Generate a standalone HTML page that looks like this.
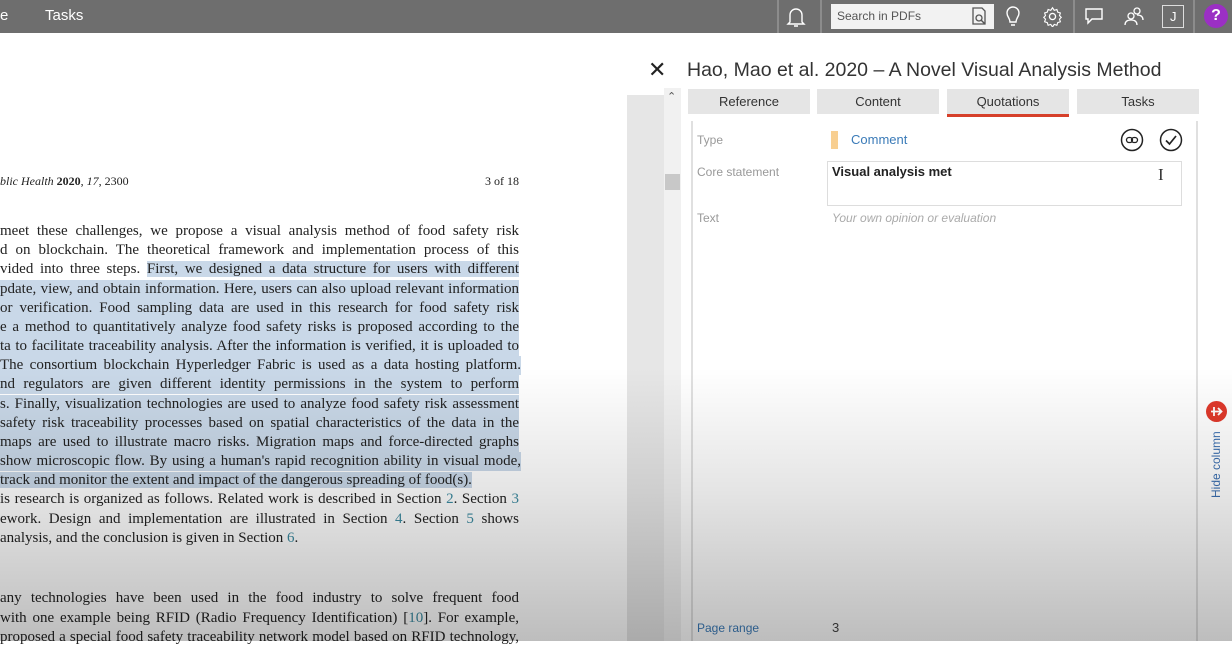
<!DOCTYPE html>
<html><head><meta charset="utf-8"><style>
*{margin:0;padding:0;box-sizing:border-box}
body{width:1232px;height:641px;overflow:hidden;position:relative;background:#fff;font-family:"Liberation Sans",sans-serif}
.abs{position:absolute}
#top{left:0;top:0;width:1232px;height:33px;background:#6e6e6e}
#top .t{color:#fff;font-size:15px;top:7px}
.div{top:0;width:2px;height:33px;background:#8c8c8c}
#pdfbg{left:0;top:33px;width:664px;height:608px;background:#fff}
#page{left:0;top:95px;width:627px;height:546px;background:#fff}
#gray{left:627px;top:95px;width:37px;height:546px;background:#e6e6e6}
#sb{left:664px;top:88px;width:17px;height:553px;background:#f1f1f1}
.ln{position:absolute;left:0;width:519px;height:19px;font-family:"Liberation Serif",serif;font-size:15px;line-height:19px;color:#222;text-align:justify;text-align-last:justify;white-space:nowrap;overflow:hidden}
.hl{background:#c9d8e8}
.lk{color:#3b8aa0}
.lab{font-size:12px;color:#999}
</style></head><body>
<div id="top" class="abs">
 <span class="abs t" style="left:0">e</span>
 <span class="abs t" style="left:45px">Tasks</span>
 <div class="abs div" style="left:777px"></div>
 <svg class="abs" style="left:786px;top:6px" width="20" height="22" viewBox="0 0 20 22"><path d="M4 16 V9 a6 6 0 0 1 12 0 V16 L18 18 H2 Z M8 20 h4" fill="none" stroke="#fff" stroke-width="1.4"/></svg>
 <div class="abs div" style="left:820px"></div>
 <div class="abs" style="left:831px;top:4px;width:163px;height:25px;background:#f2f2f2"></div>
 <span class="abs" style="left:837px;top:9px;font-size:12px;color:#555">Search in PDFs</span>
 <svg class="abs" style="left:970px;top:6px" width="20" height="20" viewBox="0 0 20 20"><path d="M3 2h9l3 3v13H3z" fill="none" stroke="#555" stroke-width="1.3"/><circle cx="9" cy="12" r="3" fill="none" stroke="#555" stroke-width="1.3"/><path d="M11 14l4 4" stroke="#555" stroke-width="1.5"/></svg>
 <svg class="abs" style="left:1004px;top:6px" width="18" height="22" viewBox="0 0 18 22"><path d="M6 16 C6 12 3 11 3 7 a6 6 0 0 1 12 0 c0 4 -3 5 -3 9 z M7 19h4" fill="none" stroke="#fff" stroke-width="1.4"/></svg>
 <svg class="abs" style="left:1042px;top:6px" width="21" height="21" viewBox="0 0 24 24"><circle cx="12" cy="12" r="3.5" fill="none" stroke="#fff" stroke-width="1.5"/><path d="M12 2l2 3 3-1 1 3 3 1-1 3 2 2-2 2 1 3-3 1-1 3-3-1-2 3-2-3-3 1-1-3-3-1 1-3-2-2 2-2-1-3 3-1 1-3 3 1z" fill="none" stroke="#fff" stroke-width="1.3"/></svg>
 <div class="abs div" style="left:1073px"></div>
 <svg class="abs" style="left:1084px;top:6px" width="20" height="20" viewBox="0 0 20 20"><path d="M2 3h16v10H8l-4 4v-4H2z" fill="none" stroke="#fff" stroke-width="1.4"/></svg>
 <svg class="abs" style="left:1123px;top:6px" width="22" height="20" viewBox="0 0 22 20"><circle cx="8" cy="10" r="3" fill="none" stroke="#fff" stroke-width="1.3"/><path d="M2 19c0-4 3-5 6-5s6 1 6 5" fill="none" stroke="#fff" stroke-width="1.3"/><circle cx="14" cy="5" r="3" fill="none" stroke="#fff" stroke-width="1.3"/><path d="M14 9c3 0 6 1 6 5" fill="none" stroke="#fff" stroke-width="1.3"/></svg>
 <div class="abs" style="left:1162px;top:5px;width:22px;height:23px;border:1px solid #ddd"></div>
 <span class="abs" style="left:1170px;top:9px;color:#fff;font-size:13px">J</span>
 <div class="abs div" style="left:1193px"></div>
 <div class="abs" style="left:1204px;top:4px;width:24px;height:24px;border-radius:50%;background:#9b2fc4;color:#fff;font-weight:bold;font-size:16px;text-align:center;line-height:24px">?</div>
</div>
<div id="pdfbg" class="abs"></div>
<div id="page" class="abs"></div>
<div id="gray" class="abs"></div>
<div id="sb" class="abs"><span class="abs" style="left:3px;top:2px;font-size:11px;color:#555">&#8963;</span><div class="abs" style="left:1px;top:86px;width:15px;height:16px;background:#c8c8c8"></div></div>

<div class="abs" style="left:0;top:174px;width:519px;font-family:'Liberation Serif',serif;font-size:12px;color:#222"><i>blic Health</i> <b>2020</b>, <i>17</i>, 2300<span style="float:right">3 of 18</span></div>

<div class="ln" style="top:222px">meet these challenges, we propose a visual analysis method of food safety risk</div>
<div class="ln" style="top:241px">d on blockchain. The theoretical framework and implementation process of this</div>
<div class="ln" style="top:260px">vided into three steps. <span class="hl">First, we designed a data structure for users with different</span></div>
<div class="ln hl" style="top:280px">pdate, view, and obtain information. Here, users can also upload relevant information</div>
<div class="ln hl" style="top:299px">or verification. Food sampling data are used in this research for food safety risk</div>
<div class="ln hl" style="top:318px">e a method to quantitatively analyze food safety risks is proposed according to the</div>
<div class="ln hl" style="top:337px">ta to facilitate traceability analysis. After the information is verified, it is uploaded to</div>
<div class="ln hl" style="top:356px;width:521px">The consortium blockchain Hyperledger Fabric is used as a data hosting platform.</div>
<div class="ln hl" style="top:375px">nd regulators are given different identity permissions in the system to perform</div>
<div class="ln hl" style="top:395px">s. Finally, visualization technologies are used to analyze food safety risk assessment</div>
<div class="ln hl" style="top:414px">safety risk traceability processes based on spatial characteristics of the data in the</div>
<div class="ln hl" style="top:433px">maps are used to illustrate macro risks. Migration maps and force-directed graphs</div>
<div class="ln hl" style="top:452px;width:521px">show microscopic flow. By using a human's rapid recognition ability in visual mode,</div>
<div class="ln" style="top:471px;text-align-last:left"><span class="hl">track and monitor the extent and impact of the dangerous spreading of food(s).</span></div>
<div class="ln" style="top:490px">is research is organized as follows. Related work is described in Section <span class="lk">2</span>. Section <span class="lk">3</span></div>
<div class="ln" style="top:510px">ework. Design and implementation are illustrated in Section <span class="lk">4</span>. Section <span class="lk">5</span> shows</div>
<div class="ln" style="top:529px;text-align-last:left">analysis, and the conclusion is given in Section <span class="lk">6</span>.</div>
<div class="ln" style="top:589px">any technologies have been used in the food industry to solve frequent food</div>
<div class="ln" style="top:609px">with one example being RFID (Radio Frequency Identification) [<span class="lk">10</span>]. For example,</div>
<div class="ln" style="top:628px">proposed a special food safety traceability network model based on RFID technology,</div>

<!-- right panel -->
<div class="abs" style="left:681px;top:33px;width:551px;height:608px;background:#fff"></div>
<span class="abs" style="left:648px;top:57px;font-size:22px;color:#222">&#x2715;</span>
<span class="abs" style="left:687px;top:59px;font-size:19.5px;color:#333">Hao, Mao et al. 2020 – A Novel Visual Analysis Method</span>
<div class="abs" style="left:688px;top:89px;width:122px;height:25px;background:#e5e5e5;text-align:center;font-size:13px;line-height:26px;color:#333">Reference</div>
<div class="abs" style="left:817px;top:89px;width:122px;height:25px;background:#e5e5e5;text-align:center;font-size:13px;line-height:26px;color:#333">Content</div>
<div class="abs" style="left:947px;top:89px;width:122px;height:25px;background:#e5e5e5;text-align:center;font-size:13px;line-height:26px;color:#333">Quotations</div>
<div class="abs" style="left:947px;top:114px;width:122px;height:3px;background:#d6402a"></div>
<div class="abs" style="left:1077px;top:89px;width:122px;height:25px;background:#e5e5e5;text-align:center;font-size:13px;line-height:26px;color:#333">Tasks</div>
<div class="abs" style="left:691px;top:121px;width:2px;height:520px;background:#e0e0e0"></div>
<div class="abs" style="left:1196px;top:121px;width:2px;height:520px;background:#e0e0e0"></div>
<span class="abs lab" style="left:697px;top:133px">Type</span>
<div class="abs" style="left:831px;top:131px;width:7px;height:18px;background:#f8cf91"></div>
<span class="abs" style="left:851px;top:132px;font-size:13px;color:#3b7bb8">Comment</span>
<svg class="abs" style="left:1120px;top:128px" width="24" height="24" viewBox="0 0 24 24"><circle cx="12" cy="12" r="10.5" fill="none" stroke="#222" stroke-width="1.5"/><rect x="6.5" y="9.5" width="6" height="5" rx="2.5" fill="none" stroke="#222" stroke-width="1.3"/><rect x="11.5" y="9.5" width="6" height="5" rx="2.5" fill="none" stroke="#222" stroke-width="1.3"/></svg>
<svg class="abs" style="left:1159px;top:128px" width="24" height="24" viewBox="0 0 24 24"><circle cx="12" cy="12" r="10.5" fill="none" stroke="#222" stroke-width="1.5"/><path d="M7 12.5l3.5 3.5 6.5-8" fill="none" stroke="#222" stroke-width="1.7"/></svg>
<span class="abs lab" style="left:697px;top:165px">Core statement</span>
<div class="abs" style="left:827px;top:161px;width:355px;height:45px;border:1px solid #ddd"></div>
<span class="abs" style="left:832px;top:164px;font-size:13px;font-weight:bold;color:#222">Visual analysis met</span>
<span class="abs" style="left:1158px;top:165px;font-size:17px;color:#333;font-family:'Liberation Serif',serif">I</span>
<span class="abs lab" style="left:697px;top:211px">Text</span>
<span class="abs" style="left:832px;top:211px;font-size:12px;font-style:italic;color:#aaa">Your own opinion or evaluation</span>
<span class="abs" style="left:697px;top:621px;font-size:12px;color:#3b7bb8">Page range</span>
<span class="abs" style="left:832px;top:620px;font-size:13px;color:#444">3</span>
<div class="abs" style="left:1206px;top:401px;width:21px;height:21px;border-radius:50%;background:#e0392b"></div>
<svg class="abs" style="left:1206px;top:401px" width="21" height="21" viewBox="0 0 21 21"><path d="M5 10.5h10M12 7l3.5 3.5L12 14M8 6v9" fill="none" stroke="#fff" stroke-width="1.8"/></svg>
<span class="abs" style="left:1209px;top:498px;transform:rotate(-90deg);transform-origin:0 0;font-size:12px;color:#3b6fb0;white-space:nowrap">Hide column</span>

<div class="abs" style="left:0;top:33px;width:1232px;height:608px;pointer-events:none;background:linear-gradient(to bottom,rgba(0,0,0,0) 0%,rgba(0,0,0,0) 55%,rgba(0,0,0,0.1) 75%,rgba(0,0,0,0.26) 100%)"></div>
</body></html>
